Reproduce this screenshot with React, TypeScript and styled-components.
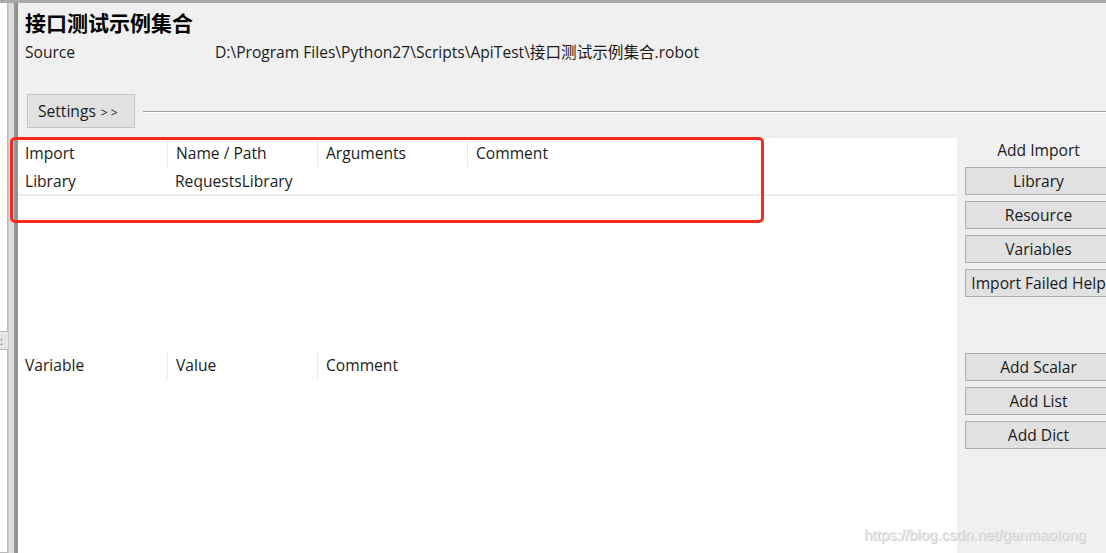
import React from "react"
import styled, { createGlobalStyle } from "styled-components"

const GlobalStyle = createGlobalStyle`
  html, body {
    margin: 0;
    padding: 0;
    background: #f0f0f0;
  }
  body {
    font-family: "Open Sans", "Noto Sans CJK SC", sans-serif;
    font-size: 15.6px;
    color: #1b1b1b;
  }
`

const Frame = styled.div`
  position: relative;
  display: flex;
  width: 1106px;
  height: 553px;
  overflow: hidden;
  border-top: 3px solid #a9a9a9;
  box-sizing: border-box;
`

const SidePane = styled.div`
  width: 8px;
  flex: none;
  display: flex;
  flex-direction: column;
  background: #f0f0f0;
`
const SideBox = styled.div<{ $grow?: boolean }>`
  background: #ffffff;
  border-right: 1px solid #b9b9b9;
  border-bottom: 1px solid #b9b9b9;
  height: ${p => (p.$grow ? "auto" : "328px")};
  flex: ${p => (p.$grow ? "1" : "none")};
`
const SideGrip = styled.div`
  height: 17px;
  font-size: 11px;
  line-height: 17px;
  color: #555;
  background: #e6e6e6;
  border-bottom: 1px solid #b9b9b9;
`

const Splitter = styled.div`
  width: 10px;
  flex: none;
  background: linear-gradient(
    to right,
    #c8c8d0 0,
    #c8c8d0 1px,
    #dcdcdc 1px,
    #dcdcdc 6px,
    #9a9a9a 6px,
    #8c8c8c 10px
  );
`

const Main = styled.div`
  flex: 1;
  display: flex;
  flex-direction: column;
  background: #f0f0f0;
  min-width: 0;
`

const Header = styled.div`
  padding: 6px 0 0 7px;
`
const Title = styled.div`
  font-size: 21px;
  font-weight: 700;
  line-height: 27px;
  color: #000;
  font-family: "Noto Sans CJK SC", sans-serif;
`
const SourceRow = styled.div`
  display: grid;
  grid-template-columns: 190px 1fr;
  margin-top: 6px;
  line-height: 20px;
`

const SettingsBar = styled.div`
  display: flex;
  align-items: center;
  gap: 8px;
  margin: 32px 0 0 9px;
`
const SettingsButton = styled.button`
  font: inherit;
  color: #1b1b1b;
  width: 108px;
  height: 34px;
  padding: 0 0 0 10px;
  text-align: left;
  background: #e1e1e1;
  border: 1px solid #c6c6c6;
`
const Chevrons = styled.span`
  font-size: 12px;
  letter-spacing: 3px;
  margin-left: 5px;
`
const Rule = styled.div`
  flex: 1;
  height: 1px;
  background: #a0a0a0;
  box-shadow: 0 1px 0 #ffffff;
`

const Section = styled.div<{ $height?: number }>`
  display: flex;
  height: ${p => (p.$height ? `${p.$height}px` : "auto")};
  flex: ${p => (p.$height ? "none" : "1")};
`
const Grid = styled.div`
  width: 939px;
  flex: none;
  background: #ffffff;
  display: flex;
  flex-direction: column;
`
const HeaderRow = styled.div`
  display: grid;
  grid-template-columns: 149px 150px 150px 1fr;
  height: 30px;
  align-items: center;
`
const HeadCell = styled.div<{ $first?: boolean }>`
  height: 28px;
  display: flex;
  align-items: center;
  padding-left: ${p => (p.$first ? "7px" : "8px")};
  border-left: ${p => (p.$first ? "none" : "1px solid #e9e9e9")};
`
const DataRow = styled.div`
  display: grid;
  grid-template-columns: 149px 150px 150px 1fr;
  height: 26px;
  align-items: center;
  border-bottom: 2px solid #ececec;
`
const Cell = styled.div<{ $first?: boolean }>`
  padding-left: ${p => (p.$first ? "7px" : "8px")};
`

const ButtonColumn = styled.div<{ $top: number }>`
  flex: 1;
  min-width: 0;
  display: flex;
  flex-direction: column;
  gap: 6px;
  padding: ${p => p.$top}px 0 0 8px;
`
const ColumnLabel = styled.div`
  width: 147px;
  text-align: center;
  line-height: 22px;
  margin-top: 1px;
`
const SideButton = styled.button`
  font: inherit;
  color: #1b1b1b;
  width: 147px;
  height: 28px;
  padding: 0;
  white-space: nowrap;
  overflow: visible;
  background: #e1e1e1;
  border: 1px solid #adadad;
  flex: none;
`

const Annotation = styled.div`
  position: absolute;
  left: 10px;
  top: 134px;
  width: 748px;
  height: 80px;
  border: 3px solid #f72a22;
  border-radius: 5px;
`
const Watermark = styled.div`
  position: absolute;
  left: 864px;
  top: 523px;
  font-family: "Liberation Sans", Arial, sans-serif;
  font-size: 15px;
  color: #e6e6e6;
  text-shadow: 1px 1px 0 #cdcdcd;
`

const importButtons = ["Library", "Resource", "Variables", "Import Failed Help"]
const variableButtons = ["Add Scalar", "Add List", "Add Dict"]

const App = () => {
  return (
    <Frame>
      <GlobalStyle />
      <SidePane>
        <SideBox />
        <SideGrip>:</SideGrip>
        <SideBox $grow />
      </SidePane>
      <Splitter />
      <Main>
        <Header>
          <Title>接口测试示例集合</Title>
          <SourceRow>
            <span>Source</span>
            <span>D:\Program Files\Python27\Scripts\ApiTest\接口测试示例集合.robot</span>
          </SourceRow>
        </Header>
        <SettingsBar>
          <SettingsButton>
            Settings<Chevrons>&gt;&gt;</Chevrons>
          </SettingsButton>
          <Rule />
        </SettingsBar>
        <Section $height={212} style={{ marginTop: 10 }}>
          <Grid>
            <HeaderRow>
              <HeadCell $first>Import</HeadCell>
              <HeadCell>Name / Path</HeadCell>
              <HeadCell>Arguments</HeadCell>
              <HeadCell>Comment</HeadCell>
            </HeaderRow>
            <DataRow>
              <Cell $first>Library</Cell>
              <Cell>RequestsLibrary</Cell>
              <Cell />
              <Cell />
            </DataRow>
          </Grid>
          <ButtonColumn $top={0}>
            <ColumnLabel>Add Import</ColumnLabel>
            {importButtons.map(b => (
              <SideButton key={b}>{b}</SideButton>
            ))}
          </ButtonColumn>
        </Section>
        <Section>
          <Grid>
            <HeaderRow>
              <HeadCell $first>Variable</HeadCell>
              <HeadCell>Value</HeadCell>
              <HeadCell>Comment</HeadCell>
              <div />
            </HeaderRow>
          </Grid>
          <ButtonColumn $top={3}>
            {variableButtons.map(b => (
              <SideButton key={b}>{b}</SideButton>
            ))}
          </ButtonColumn>
        </Section>
      </Main>
      <Annotation />
      <Watermark>https://blog.csdn.net/ganmaotong</Watermark>
    </Frame>
  )
}

export default App
